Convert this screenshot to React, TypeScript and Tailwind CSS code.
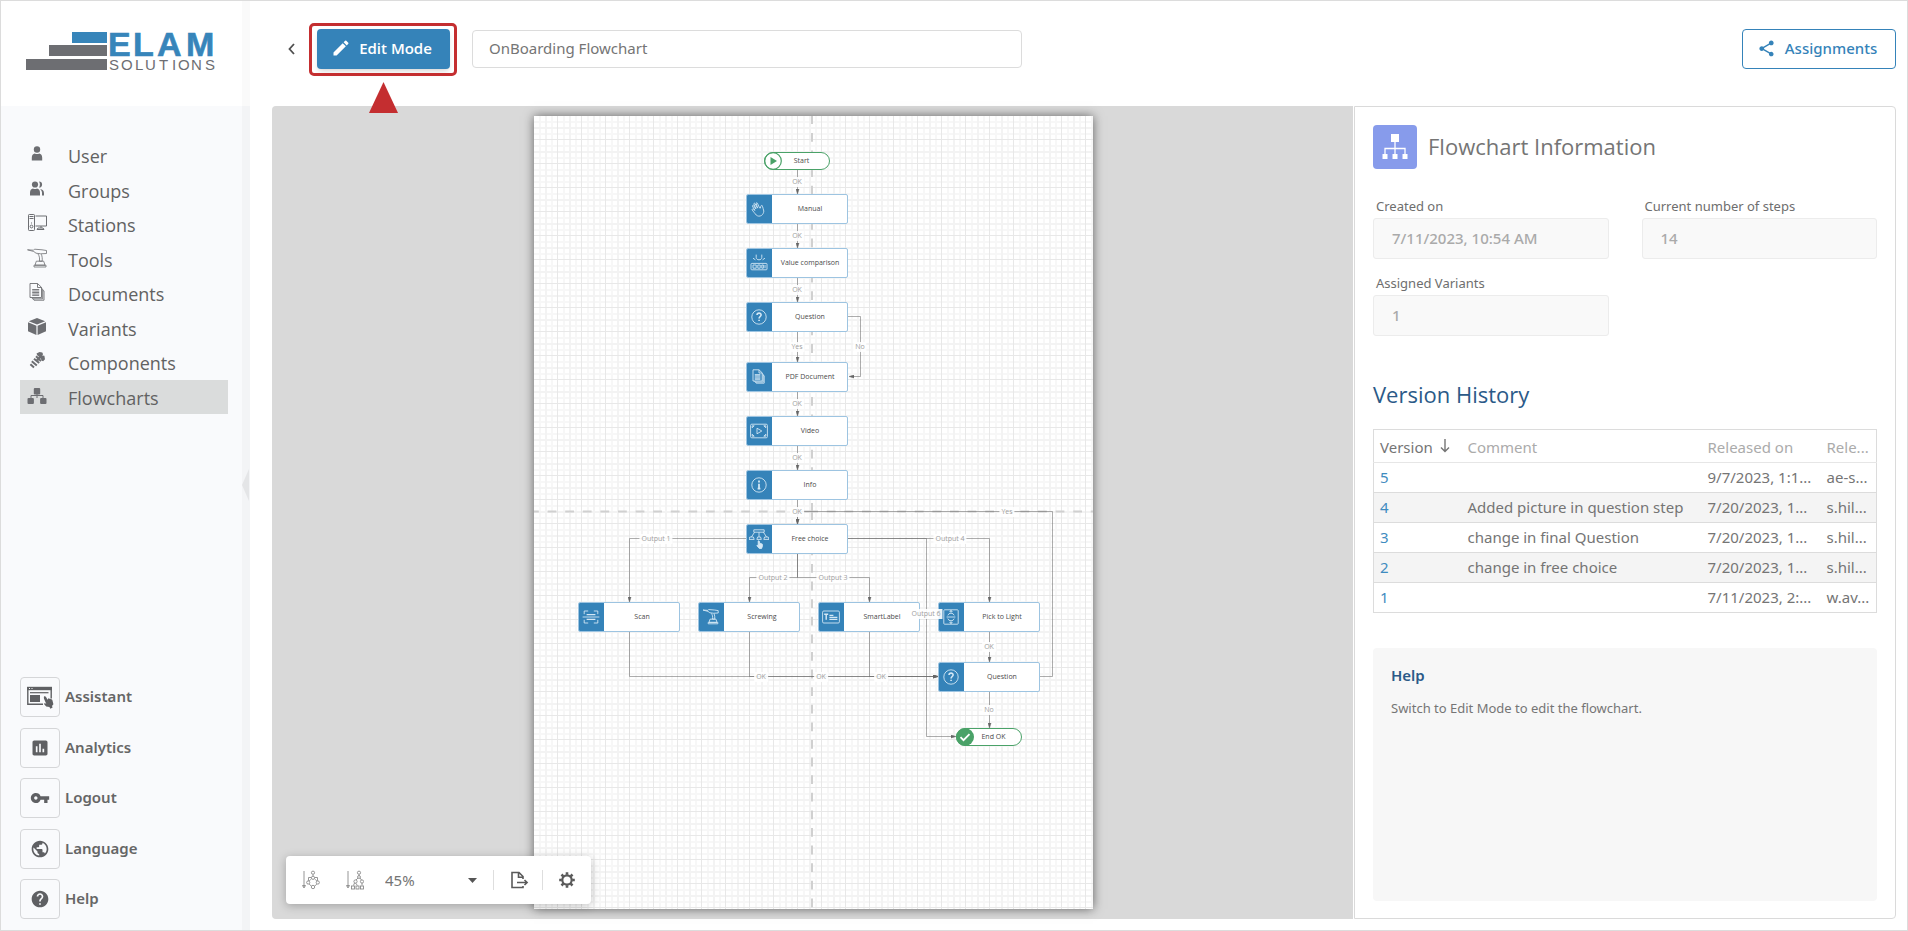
import React from "react";
import { MdEdit, MdShare, MdInsertChart, MdVpnKey, MdPublic, MdHelp } from "react-icons/md";

const iconProps = { width: 20, height: 20, viewBox: "0 0 20 20", fill: "none", stroke: "currentColor", strokeWidth: 1 };

const UserIcon = () => (
  <svg {...iconProps} aria-hidden="true">
    <g fill="currentColor" stroke="none">
      <circle cx="10" cy="5.5" r="3.2" />
      <path d="M4.8 16.5v-2.8c0-2.4 1.2-3.9 3-4.2.6.4 1.4.6 2.2.6s1.6-.2 2.2-.6c1.8.3 3 1.8 3 4.2v2.8z" />
    </g>
  </svg>
);

const GroupsIcon = () => (
  <svg {...iconProps} aria-hidden="true">
    <g fill="currentColor" stroke="none">
      <circle cx="8" cy="5.5" r="3.1" />
      <path d="M3 16.5v-2.8c0-2.4 1.2-3.9 3-4.2.6.4 1.2.6 2 .6s1.4-.2 2-.6c1.8.3 3 1.8 3 4.2v2.8z" />
      <path d="M12 2.4a3 3 0 0 1 0 6.2c1.2-1.8 1.2-4.4 0-6.2zM13 9.9c2.6.3 4 1.8 4 4.3v2.3h-2v-2.8c0-1.6-.8-2.9-2-3.8z" />
    </g>
  </svg>
);

const StationsIcon = () => (
  <svg {...iconProps} aria-hidden="true">
    <rect x="1.5" y="1.5" width="6" height="16" rx="0.8" />
    <path d="M2.5 3.5h4M2.5 5.5h4M8.5 3h11v10h-11M10 16.5h7l-1-1.500h-5zM14 13v2" />
    <circle cx="4.5" cy="13.5" r="1.4" />
    <path d="M4.5 9.5v1" />
  </svg>
);

const ToolPaths = () => (
  <>
    <path d="M.5 1.800l6 .4 1-1 7.500.6 4.500.7v3l-5.800.3-4.700-.6-2.200-1.700L.5 1.800z" />
    <path d="M11 6c1.400 2 1.800 4 1.400 7.200h2.800c.2-2.700 0-4.800-.9-7M9.300 13.200h7.400l1.300 4H8zM7 17.200h12v1.800H7z" />
  </>
);

const ToolsIcon = () => (
  <svg {...iconProps} strokeWidth={0.8} aria-hidden="true">
    <ToolPaths />
  </svg>
);

const DocumentPaths = () => (
  <>
    <path d="M3 1.5h7.500l4 3.800V15.500H3zM10.500 1.500v4h4M14.500 6.500l1.200.6v9.700H5.500l-.4-1.300M15.800 8.500l1.200.4V18.200H7l-.6-1.400" />
    <path d="M5.200 7.500h7M5.200 9h7M5.200 10.500h7M5.200 12h7M5.200 13.400h7" />
  </>
);

const DocumentsIcon = () => (
  <svg {...iconProps} strokeWidth={0.9} aria-hidden="true">
    <DocumentPaths />
  </svg>
);

const VariantsIcon = () => (
  <svg {...iconProps} aria-hidden="true">
    <g fill="currentColor" stroke="none">
      <path d="M10 1l8.200 3.200L10 7.600 1.800 4.200z" />
      <path d="M1 5.300l8.400 3.500V18L1 14.300zM19 5.300l-8.400 3.500V18l8.400-3.700z" />
    </g>
  </svg>
);

const ComponentsIcon = () => (
  <svg {...iconProps} aria-hidden="true">
    <path
      fill="currentColor"
      stroke="none"
      d="M9.500 2.400l3-1.400 2.800.6.8 1.600-1 1.400 2.300.2.600 3.400-1.900 2-1.300-.5-1.700-3.200-2.700-1.900z"
    />
    <path strokeWidth="2" d="M9 5.300l5 4.800M7 7.800l5.200 4.300M4.800 10.300l5 4.200M3.400 13.200l3.600 3.200" />
    <path strokeWidth="2.600" d="M13.500 5.500L10 9.500" />
  </svg>
);

const FlowchartsIcon = () => (
  <svg {...iconProps} aria-hidden="true">
    <path d="M10 8v4M4 12v-2.500h12V12" />
    <g fill="currentColor" stroke="none">
      <rect x="6.8" y="2" width="6.400" height="6.400" rx="1" />
      <rect x="0.5" y="12" width="6.400" height="6" rx="1" />
      <rect x="13.1" y="12" width="6.400" height="6" rx="1" />
    </g>
  </svg>
);

const HandPointer = () => (
  <path
    fill="currentColor"
    stroke="none"
    d="M18 12.500c.8-.7 1.600-.2 2 .6l1.600 2.600.6-1c.5-.6 1.100-.3 1.400.2.600-.4 1.100-.2 1.400.4.700-.2 1.200.2 1.400.9l1 4-1.400 1.800.6 1.600-2.200 1.200-1-1.700-3.200-.6-2-2.200c-.4-.8.4-1.400 1.100-1l1 .6-2.300-5.200c-.2-.8-.2-1.700 0-2.200z"
  />
);

const AssistantIcon = () => (
  <svg width="28" height="26" viewBox="0 0 28 26" fill="none" stroke="currentColor" aria-hidden="true">
    <path d="M17 20.200H1.800V4.500h23.400v10" strokeWidth="1.400" />
    <path d="M1 4.500h25" strokeWidth="3.400" />
    <path d="M3 4.500h1M5.500 4.500h1" stroke="#f9fafc" strokeWidth="1" />
    <path d="M4 8.700h18.500" strokeWidth="1.200" />
    <rect x="4" y="11" width="10" height="7" fill="currentColor" stroke="none" />
    <HandPointer />
  </svg>
);

const navItems = [
  { label: "User", Icon: UserIcon },
  { label: "Groups", Icon: GroupsIcon },
  { label: "Stations", Icon: StationsIcon },
  { label: "Tools", Icon: ToolsIcon },
  { label: "Documents", Icon: DocumentsIcon },
  { label: "Variants", Icon: VariantsIcon },
  { label: "Components", Icon: ComponentsIcon },
  { label: "Flowcharts", Icon: FlowchartsIcon, active: true },
];

const utilityItems = [
  { label: "Assistant", icon: <AssistantIcon /> },
  { label: "Analytics", icon: <MdInsertChart size={20} /> },
  { label: "Logout", icon: <MdVpnKey size={20} /> },
  { label: "Language", icon: <MdPublic size={20} /> },
  { label: "Help", icon: <MdHelp size={20} /> },
];

function Logo() {
  return (
    <svg width="200" height="60" viewBox="26 22 200 60" role="img" aria-label="ELAM Solutions">
      <path fill="#3785ba" d="M72 32h35v11H72z" />
      <path fill="#6d6e72" d="M49 45h58v11H49zM26 59h81v11H26z" />
      <text
        x="108 133 157 186"
        y="56"
        fill="#3785ba"
        stroke="#3785ba"
        strokeWidth="0.6"
        fontFamily="Liberation Sans, sans-serif"
        fontWeight="700"
        fontSize="34"
      >
        ELAM
      </text>
      <text
        x="109 121 135 145 159 172 178 191 205"
        y="70"
        fill="#6d6e72"
        fontFamily="Liberation Sans, sans-serif"
        fontSize="15"
      >
        SOLUTIONS
      </text>
    </svg>
  );
}

function Sidebar() {
  return (
    <aside className="flex w-[249px] shrink-0 bg-[#f9fafc]">
      <div className="flex min-w-0 flex-1 flex-col">
        <div className="h-[105px] bg-white pt-[21px] pl-[25px]">
          <Logo />
        </div>
        <nav className="mt-8 mr-[14px] ml-[19px] flex h-[276px] flex-col justify-between">
          {navItems.map(({ label, Icon, active }) => (
            <a
              key={label}
              href="#"
              className={`flex h-[34px] items-center gap-[21px] pl-[7px] text-[18px] leading-6 text-[#626262] ${active ? "bg-[#dadcdc]" : ""}`}
            >
              <span className="pb-0.5 text-[#6d6e72]">
                <Icon />
              </span>
              <span className="pt-0.5">{label}</span>
            </a>
          ))}
        </nav>
        <div className="mt-auto mb-[11px] ml-[19px] flex h-[242px] flex-col justify-between">
          {utilityItems.map(({ label, icon }) => (
            <button
              key={label}
              type="button"
              className="flex items-center gap-[5px] font-['Noto_Sans','Open_Sans',sans-serif] text-[15px] leading-5 font-semibold text-[#666666]"
            >
              <span className="flex size-10 items-center justify-center rounded-[4px] border border-[#d5d6d8] text-[#5f6063]">
                {icon}
              </span>
              <span className="pb-0.5">{label}</span>
            </button>
          ))}
        </div>
      </div>
      <div className="flex w-2 flex-col bg-[#f3f4f6]">
        <div className="h-[105px] bg-[#fafafa]" />
        <button type="button" aria-label="Collapse sidebar" className="mt-[363px]">
          <svg width="8" height="32" viewBox="0 0 8 32" aria-hidden="true">
            <path d="M7 0v32L0 16z" fill="#e4e5e7" />
          </svg>
        </button>
      </div>
    </aside>
  );
}

function Header() {
  return (
    <header className="relative z-10 flex h-[105px] items-start pt-7 pr-[11px] pl-[35px]">
      <button type="button" aria-label="Back" className="mr-5 flex h-10 w-3 items-center text-[#4f4f4f]">
        <svg width="12" height="12" viewBox="0 0 12 12" fill="none" stroke="currentColor" strokeWidth="1.8" aria-hidden="true">
          <path d="M9 1L4.500 6 9 11" />
        </svg>
      </button>
      <div className="relative">
        <button
          type="button"
          className="flex h-10 w-[133px] items-center justify-center gap-2 rounded-[4px] bg-[#3583b9] pr-1 pb-0.5 text-[15px] font-semibold text-white shadow-md"
        >
          <MdEdit size={20} />
          Edit Mode
        </button>
        <span className="pointer-events-none absolute -top-[6px] -right-[7px] -bottom-[7px] -left-2 rounded-[5px] border-3 border-[#c42e30]" />
        <svg className="absolute top-[53px] left-[52px]" width="29" height="31" viewBox="0 0 29 31" aria-hidden="true">
          <path d="M14.500 0L29 31H0z" fill="#c42e30" />
        </svg>
      </div>
      <input
        aria-label="Flowchart name"
        defaultValue="OnBoarding Flowchart"
        className="mt-px ml-[22px] h-[38px] w-[550px] rounded-[4px] border border-[#dcdcdc] bg-white px-4 pb-0.5 font-['Noto_Sans','Open_Sans',sans-serif] text-[15px] text-[#757575]"
      />
      <button
        type="button"
        className="ml-auto flex h-10 w-[154px] items-center justify-center gap-[9px] rounded-[4px] border border-[#3583b9] pr-1 pb-0.5 font-['Noto_Sans','Open_Sans',sans-serif] text-[15px] font-medium text-[#3583b9]"
      >
        <MdShare size={19} />
        Assignments
      </button>
    </header>
  );
}

const glyphs: Record<string, React.ReactNode> = {
  hand: (
    <path d="M7 18c-1.500-2-4-4.500-5-6.500-.3-.9.800-1.500 1.500-.8l2 1.600L2.200 7c-.3-.9 1-1.500 1.500-.6l3 4L4 4.300c-.2-.9 1-1.400 1.500-.5l3.200 5.600L7 3.500c-.1-.9 1.100-1.200 1.500-.3l2.700 6 1 .2c.3-1.400.5-2.700 1.300-3.300.8-.3 1.400.3 1.300 1 0 1.800 1.700 3.400 1.700 6 0 2.300-1.400 4.300-2.800 5.400C11.500 20 8.600 19.600 7 18z" />
  ),
  compare: (
    <>
      <path d="M7 0v3.500c0 2 1.500 3 3.500 3s3.500-1 3.500-3V0M3 4.500l3 2M18 4.500l-3 2" />
      <rect x="0.5" y="11" width="20" height="8" rx="1" />
      <path d="M3 13h4v4H3zM9 13h3v4H9zM14 13h2v4h-2zM18 13v4" />
    </>
  ),
  question: (
    <>
      <circle cx="10.5" cy="10.5" r="9" />
      <path strokeWidth="2" d="M8 8c.2-3.200 5.300-3 5.100 0-.1 1.900-2.500 1.900-2.500 4.500M10.600 14v1.600" />
    </>
  ),
  document: <DocumentPaths />,
  video: (
    <>
      <rect x="0" y="2" width="21" height="17" rx="1.5" />
      <path d="M8 7v7l6-3.500zM2 6.500L4.500 4H2zM19 6.500L16.500 4H19zM2 14.500L4.500 17H2zM19 14.500L16.500 17H19z" />
    </>
  ),
  info: (
    <>
      <circle cx="10.5" cy="10.5" r="9" />
      <path strokeWidth="2.200" d="M10.500 9v6M10.500 5v2.300M8.800 15h3.400" />
    </>
  ),
  choice: (
    <>
      <path d="M4 -1h13v3H4zM10.500 2v6M5 2L1 8M16 2l4 6M-2 11l1-3h4.500l1 3zM7.800 11l1-3h3.600l1 3zM16.500 11l1-3H22l1 3z" />
      <path fill="currentColor" d="M9.500 13c.6-.7 1.400-.3 1.500.5l.5 2.500 3 .7.3 2.600-1 3h-3l-3-3.600 1.800-.5z" />
    </>
  ),
  scan: (
    <>
      <path d="M2 7V3h5M14 3h5v4M2 14v4h5M14 18h5v-4M0 10.500h21" />
      <path strokeWidth="1.8" d="M5 7.500h11M5 13.500h11" />
    </>
  ),
  tool: <ToolPaths />,
  label: (
    <>
      <rect x="0" y="3" width="21" height="15" rx="1.5" />
      <path strokeWidth="1.800" d="M2 7h5M4.500 7v7" />
      <path strokeWidth="1.400" d="M8.500 8.500h5M8.500 11h10M8.500 13.500h10" />
    </>
  ),
  light: (
    <>
      <rect x="1.5" y="1.5" width="18" height="18" rx="1" />
      <path d="M5 10.500h11M6.500 8.500a4.200 4 0 0 1 8 0M6.500 12.500a4.200 4 0 0 0 8 0M9 4l1.500-2L12 4zM9 17l1.500 2 1.500-2z" />
    </>
  ),
};

const nodes = [
  { label: "Manual", glyph: "hand", x: 212, y: 78 },
  { label: "Value comparison", glyph: "compare", x: 212, y: 132 },
  { label: "Question", glyph: "question", x: 212, y: 186 },
  { label: "PDF Document", glyph: "document", x: 212, y: 246 },
  { label: "Video", glyph: "video", x: 212, y: 300 },
  { label: "Info", glyph: "info", x: 212, y: 354 },
  { label: "Free choice", glyph: "choice", x: 212, y: 408 },
  { label: "Scan", glyph: "scan", x: 44, y: 486 },
  { label: "Screwing", glyph: "tool", x: 164, y: 486 },
  { label: "SmartLabel", glyph: "label", x: 284, y: 486 },
  { label: "Pick to Light", glyph: "light", x: 404, y: 486 },
  { label: "Question", glyph: "question", x: 404, y: 546 },
];

const edgeLabels = [
  { text: "OK", x: 263, y: 66 },
  { text: "OK", x: 263, y: 120 },
  { text: "OK", x: 263, y: 174 },
  { text: "Yes", x: 263, y: 231 },
  { text: "No", x: 326, y: 231 },
  { text: "OK", x: 263, y: 288 },
  { text: "OK", x: 263, y: 342 },
  { text: "OK", x: 263, y: 396 },
  { text: "Yes", x: 473, y: 396 },
  { text: "Output 1", x: 122, y: 423 },
  { text: "Output 4", x: 416, y: 423 },
  { text: "Output 2", x: 239, y: 462 },
  { text: "Output 3", x: 299, y: 462 },
  { text: "Output 6", x: 392, y: 498 },
  { text: "OK", x: 455, y: 531 },
  { text: "OK", x: 227, y: 561 },
  { text: "OK", x: 287, y: 561 },
  { text: "OK", x: 347, y: 561 },
  { text: "No", x: 455, y: 594 },
];

const arrows = [
  "M263.5 54V76",
  "M263.5 108V130",
  "M263.5 162V184",
  "M263.5 216V244",
  "M263.5 276V298",
  "M263.5 330V352",
  "M263.5 384V406",
  "M314 200.5H326.5V260.5H317",
  "M212 422.5H95.5V484",
  "M263.5 438V461.5H215.5V484",
  "M263.5 438V461.5H335.5V484",
  "M314 422.5H455.5V484",
  "M314 422.5H392.5V620.5H420",
  "M455.5 516V544",
  "M455.5 576V610",
  "M95.5 516V560.5H402",
  "M215.5 516V560.5H402",
  "M335.5 516V560.5H402",
  "M506 560.5H518.5V395.5H263.5V406",
];

function FlowPage() {
  return (
    <div className="relative h-[793px] w-[559px] shrink-0 bg-white shadow-[0_0_10px_rgba(0,0,0,0.55)]">
      <svg className="block" width="559" height="793" viewBox="0 0 559 793" fill="none" aria-hidden="true">
        <defs>
          <pattern id="grid" width="24" height="24" patternUnits="userSpaceOnUse">
            <path d="M6 0V24M18 0V24M0 6H24M0 18H24" stroke="#f7f7f7" strokeWidth="2" />
            <path d="M12 0V24M0 12H24" stroke="#f3f3f3" strokeWidth="2" />
            <path d="M23.500 0V24M0 23.500H24" stroke="#e8e8e8" />
          </pattern>
          <marker id="tip" markerWidth="5" markerHeight="4" refX="3" refY="2" orient="auto" markerUnits="userSpaceOnUse">
            <path d="M0 .5L5 2 0 3.500z" fill="#666" stroke="#666" strokeWidth="0.5" />
          </marker>
        </defs>
        <rect width="559" height="793" fill="url(#grid)" />
        <g stroke="#d0d0d0" strokeWidth="2" strokeDasharray="8.800 8.800">
          <path d="M278 386.500V0" strokeDashoffset="8.800" />
          <path d="M278 404V793" strokeDashoffset="8.800" />
          <path d="M268.800 395.500H0" />
          <path d="M292.800 395.500H559" />
        </g>
        <path d="M278 387v17M270 395.500h14" stroke="#d0d0d0" strokeWidth="2" />
        <g stroke="#6a6a6a" strokeOpacity="0.55" strokeWidth="1">
          {arrows.map((d) => (
            <path key={d} d={d} markerEnd="url(#tip)" />
          ))}
        </g>
      </svg>

      {nodes.map((n, i) => (
        <div
          key={i}
          className="absolute flex h-[30px] w-[102px] overflow-hidden rounded-[2px] border border-[#9dc4e1] bg-white"
          style={{ left: n.x, top: n.y }}
        >
          <span className="-my-px -ml-px flex w-[26px] shrink-0 items-center justify-center bg-[#3583b9] text-[#d5e8f5]">
            <svg
              width="20"
              height="20"
              viewBox="-2 -2 25 25"
              fill="none"
              stroke="currentColor"
              strokeWidth="1.1"
              aria-hidden="true"
            >
              {glyphs[n.glyph]}
            </svg>
          </span>
          <span className="flex flex-1 items-center justify-center pb-px pl-px text-[7px] leading-[10px] whitespace-nowrap text-[#4a4a4a]">
            {n.label}
          </span>
        </div>
      ))}

      <div className="absolute top-9 left-[230px] flex h-[18px] w-[66px] items-center rounded-full border border-[#4aa268] bg-white text-[7px] leading-[10px] text-[#4a4a4a]">
        <svg className="-my-px -ml-px shrink-0" width="18" height="18" viewBox="0 0 18 18" fill="none" aria-hidden="true">
          <circle cx="9" cy="9" r="8.300" stroke="#4aa268" strokeWidth="1.200" />
          <path d="M6.500 5v8l6.500-4z" fill="#4aa268" />
        </svg>
        <span className="flex-1 pr-2 pb-px text-center">Start</span>
      </div>
      <div className="absolute top-[612px] left-[422px] flex h-[18px] w-[66px] items-center rounded-full border border-[#4aa268] bg-white text-[7px] leading-[10px] text-[#4a4a4a]">
        <svg className="-my-px -ml-px shrink-0" width="18" height="18" viewBox="0 0 18 18" fill="none" aria-hidden="true">
          <circle cx="9" cy="9" r="9" fill="#4aa268" />
          <path d="M4.500 9.200l3 3 6-6" stroke="white" strokeWidth="1.800" />
        </svg>
        <span className="flex-1 pr-2 pb-px text-center">End OK</span>
      </div>

      {edgeLabels.map((l, i) => (
        <span
          key={i}
          className="absolute -translate-x-1/2 -translate-y-1/2 bg-white/90 px-0.5 text-[7px] leading-[10px] whitespace-nowrap text-[#a0a0a0]"
          style={{ left: l.x, top: l.y }}
        >
          {l.text}
        </span>
      ))}
    </div>
  );
}

function Toolbar() {
  return (
    <div className="absolute bottom-[15px] left-[14px] flex h-12 w-[305px] items-center rounded-[4px] bg-white pr-4 pl-4 text-[#5a5a5a] shadow-[0_2px_10px_rgba(0,0,0,0.25)]">
      <button type="button" aria-label="Organic layout" className="text-[#8a8a8a]">
        <svg width="18" height="20" viewBox="0 0 18 20" fill="none" stroke="currentColor" strokeWidth="0.9" aria-hidden="true">
          <path d="M2 1v16M.5 15.500L2 18l1.500-2.500zM11 4.500v1.500M9 9.200L7.200 11M13 9.200l1.800 1.800M7.200 14l2 2M14.800 14l-2 2M9.200 7.500H6.500v3.300M12.800 7.500h2.700v3.300" />
          <circle cx="11" cy="2.700" r="1.600" />
          <circle cx="11" cy="7.800" r="1.600" />
          <circle cx="6.200" cy="12.500" r="1.600" />
          <circle cx="15.800" cy="12.500" r="1.600" />
          <circle cx="11" cy="17" r="1.700" />
        </svg>
      </button>
      <button type="button" aria-label="Tree layout" className="ml-[26px] text-[#8a8a8a]">
        <svg width="18" height="20" viewBox="0 0 18 20" fill="none" stroke="currentColor" strokeWidth="0.9" aria-hidden="true">
          <path d="M2 1v16M.5 15.500L2 18l1.500-2.500zM13 4.500v1.500M12 8l-2 2M14 8l1.500 2M8.500 13l-1 2.500M9.500 13l2 2.500M16 13v2.500" />
          <circle cx="13" cy="2.700" r="1.600" />
          <circle cx="13" cy="7" r="1.400" />
          <circle cx="9.500" cy="11.500" r="1.600" />
          <circle cx="16" cy="11.500" r="1.600" />
          <rect x="5.500" y="16" width="3" height="3" />
          <rect x="10" y="16" width="3" height="3" />
          <rect x="14.500" y="16" width="3" height="3" />
        </svg>
      </button>
      <div className="relative ml-[21px] w-[92px]">
        <select
          aria-label="Zoom"
          defaultValue="45%"
          className="w-full appearance-none bg-transparent font-['Noto_Sans','Open_Sans',sans-serif] text-[15px] leading-6 text-[#757575]"
        >
          <option>45%</option>
          <option>100%</option>
        </select>
        <svg className="pointer-events-none absolute top-[10px] right-0" width="9" height="5" viewBox="0 0 9 5" aria-hidden="true">
          <path d="M0 0h9L4.500 5z" fill="#555" />
        </svg>
      </div>
      <span className="ml-4 h-5 w-px bg-[#dedede]" />
      <button type="button" aria-label="Export" className="ml-4">
        <svg width="19" height="18" viewBox="0 0 19 18" fill="none" stroke="currentColor" strokeWidth="1.6" aria-hidden="true">
          <path d="M13 8V5.500L9 1.500H2V16.500h11V15M8.500 1.500V6.200H13M7 11.500h10M14.500 9l2.600 2.500-2.600 2.500" />
        </svg>
      </button>
      <span className="ml-[13px] h-5 w-px bg-[#dedede]" />
      <button type="button" aria-label="Settings" className="ml-auto">
        <svg width="16" height="16" viewBox="0 0 16 16" fill="none" stroke="currentColor" aria-hidden="true">
          <circle cx="8" cy="8" r="4.700" strokeWidth="2.200" />
          <path
            strokeWidth="2.600"
            d="M8 .2v2.600M8 13.200v2.600M.2 8h2.600M13.200 8h2.600M2.500 2.500l1.800 1.800M11.700 11.700l1.800 1.800M2.500 13.500l1.800-1.800M11.700 4.300l1.800-1.800"
          />
        </svg>
      </button>
    </div>
  );
}

function Field({ id, label, value }: { id: string; label: string; value: string }) {
  return (
    <div className="flex flex-col">
      <label htmlFor={id} className="pl-[3px] text-[13px] leading-6 text-[#6e6e6e]">
        {label}
      </label>
      <input
        id={id}
        readOnly
        value={value}
        className="h-[41px] w-full rounded-[3px] border border-[#ececec] bg-[#f9f9f9] px-[18px] pb-0.5 text-[15px] font-medium text-[#aaaaaa]"
      />
    </div>
  );
}

const versions = [
  { version: "5", comment: "", released: "9/7/2023, 1:1...", by: "ae-s..." },
  { version: "4", comment: "Added picture in question step", released: "7/20/2023, 1...", by: "s.hil..." },
  { version: "3", comment: "change in final Question", released: "7/20/2023, 1...", by: "s.hil..." },
  { version: "2", comment: "change in free choice", released: "7/20/2023, 1...", by: "s.hil..." },
  { version: "1", comment: "", released: "7/11/2023, 2:...", by: "w.av..." },
];

function InfoPanel() {
  return (
    <section className="flex w-[542px] shrink-0 flex-col rounded-r-[4px] border border-[#dadada] bg-white px-[18px] pt-[18px] pb-[17px] font-['Noto_Sans','Open_Sans',sans-serif]">
      <div className="flex items-center gap-[11px]">
        <span className="flex size-11 items-center justify-center rounded-[4px] bg-[#879beb]">
          <svg width="26" height="26" viewBox="0 0 26 26" fill="none" stroke="white" aria-hidden="true">
            <path d="M13 8v12M3 20v-5.500h20V20" strokeWidth="1.3" />
            <path d="M9 0h8v8H9zM.5 20h5v5h-5zM10.500 20h5v5h-5zM20.500 20h5v5h-5z" fill="white" stroke="none" />
          </svg>
        </span>
        <h1 className="pb-0.5 font-['Open_Sans','Noto_Sans',sans-serif] text-[22px] leading-8 text-[#757575]">
          Flowchart Information
        </h1>
      </div>
      <div className="mt-[25px] grid grid-cols-2 gap-x-[33px] gap-y-3">
        <Field id="created" label="Created on" value="7/11/2023, 10:54 AM" />
        <Field id="steps" label="Current number of steps" value="14" />
        <Field id="variants" label="Assigned Variants" value="1" />
      </div>
      <h2 className="mt-[42px] font-['Open_Sans','Noto_Sans',sans-serif] text-[22px] leading-8 text-[#2b5a88]">
        Version History
      </h2>
      <table className="mt-[19px] w-full table-fixed border border-[#dcdcdc] text-left text-[15px] text-[#757575]">
        <colgroup>
          <col className="w-[88px]" />
          <col />
          <col className="w-[119px]" />
          <col className="w-[56px]" />
        </colgroup>
        <thead>
          <tr className="h-[33px] border-b border-[#e6e6e6] whitespace-nowrap text-[#ababab]">
            <th className="pt-0.5 pl-[6px] font-normal text-[#757575]">
              Version
              <svg
                className="ml-[7px] inline-block align-baseline"
                width="10"
                height="14"
                viewBox="0 0 10 14"
                fill="none"
                stroke="currentColor"
                strokeWidth="1.4"
                aria-hidden="true"
              >
                <path d="M5 0v12M1 8.500L5 12.500 9 8.500" />
              </svg>
            </th>
            <th className="pt-0.5 pl-[6px] font-normal">Comment</th>
            <th className="pt-0.5 pl-[6px] font-normal">Released on</th>
            <th className="pt-0.5 pl-[6px] font-normal">Rele...</th>
          </tr>
        </thead>
        <tbody>
          {versions.map((v) => (
            <tr
              key={v.version}
              className="h-[30px] border-b border-[#dcdcdc] leading-5 whitespace-nowrap even:bg-[#f4f4f4]"
            >
              <td className="pb-0.5 pl-[6px]">
                <a href="#" className="text-[#3f8cc0]">
                  {v.version}
                </a>
              </td>
              <td className="pb-0.5 pl-[6px]">{v.comment}</td>
              <td className="pb-0.5 pl-[6px]">{v.released}</td>
              <td className="pb-0.5 pl-[6px]">{v.by}</td>
            </tr>
          ))}
        </tbody>
      </table>
      <div className="mt-[35px] flex-1 rounded-[4px] bg-[#f7f7f7] px-[18px] pt-[15px] text-[13px] text-[#757575]">
        <h3 className="text-[15px] leading-6 font-semibold text-[#2b5a88]">Help</h3>
        <p className="mt-[9px] leading-6">Switch to Edit Mode to edit the flowchart.</p>
      </div>
    </section>
  );
}

export default function App() {
  return (
    <div className="flex min-h-screen border border-[#dcdcdc] bg-white font-['Open_Sans','Noto_Sans',sans-serif]">
      <Sidebar />
      <main className="flex min-w-0 flex-1 flex-col">
        <Header />
        <div className="mr-[11px] mb-[11px] ml-[22px] flex flex-1">
          <div className="relative mr-px flex flex-1 items-start justify-center rounded-l-[4px] bg-[#d9d9d9] pt-[10px] pb-2 pl-0.5">
            <FlowPage />
            <Toolbar />
          </div>
          <InfoPanel />
        </div>
      </main>
    </div>
  );
}
